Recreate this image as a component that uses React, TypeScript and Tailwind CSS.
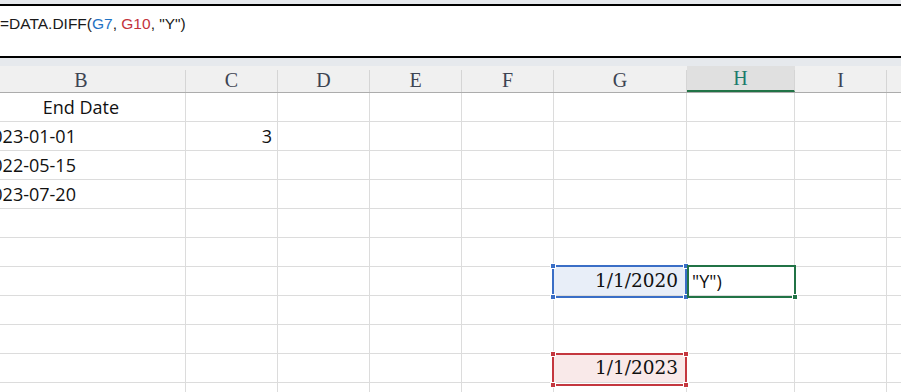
const cols = [
  { key: 'B', w: 'w-[209px] -ml-[23px]' },
  { key: 'C', w: 'w-[92px]' },
  { key: 'D', w: 'w-[92px]' },
  { key: 'E', w: 'w-[92px]' },
  { key: 'F', w: 'w-[92px]' },
  { key: 'G', w: 'w-[133px]' },
  { key: 'H', w: 'w-[108px]' },
  { key: 'I', w: 'w-[92px]' },
  { key: 'J', w: 'w-[92px]' },
];

type Cell = { text?: string; align?: 'left' | 'right' | 'center'; serif?: boolean; bg?: string };
type RowData = Record<string, Cell>;

const rows: RowData[] = [
  { B: { text: 'End Date', align: 'center' } },
  { B: { text: '2023-01-01' }, C: { text: '3', align: 'right' } },
  { B: { text: '2022-05-15' } },
  { B: { text: '2023-07-20' } },
  {},
  {},
  {
    G: { text: '1/1/2020', align: 'right', serif: true, bg: 'bg-[#e8eef8]' },
    H: { text: '"Y")' },
  },
  {},
  {},
  { G: { text: '1/1/2023', align: 'right', serif: true, bg: 'bg-[#f9e9e9]' } },
  {},
];

const sans = "font-['Open_Sans','Noto_Sans',sans-serif]";

const Handle = ({ className }: { className: string }) => (
  <span className={`absolute h-[6px] w-[6px] border border-white ${className}`} />
);

const App = () => (
  <div className="relative h-[392px] w-[901px] overflow-hidden bg-white">
    <div className="h-[4px] bg-[#e6e9ed]" />
    <div className="h-[54px] border-y-2 border-black bg-white pt-[9px] font-['Liberation_Sans',Arial,sans-serif] text-[15.5px] leading-[18px] text-[#1a1a1a]">
      =DATA.DIFF(<span className="text-[#1f73c4]">G7</span>,{' '}
      <span className="text-[#c3323c]">G10</span>, "Y")
    </div>
    <div className="h-[8px] bg-[#e6e9ed]" />

    <div className="flex h-[27px] border-b border-[#acacac] bg-[#f0f0f0] font-['Liberation_Serif',serif] text-[20px] text-[#3d4452]">
      {cols.map((c) => (
        <div
          key={c.key}
          className={`${c.w} shrink-0 pt-[4px] ${c.key === 'H' ? 'bg-[#e0e0e0]' : ''}`}
        >
          <div
            className={`flex h-full items-end justify-center border-r border-[#d5d5d5] pb-[1px] leading-[22px] ${
              c.key === 'H' ? 'border-b-2 border-b-[#217346] text-[#1c7c6c]' : ''
            }`}
          >
            {c.key === 'J' ? '' : c.key}
          </div>
        </div>
      ))}
    </div>

    {rows.map((r, i) => (
      <div key={i} className="flex h-[29px] border-b border-[#dcdcdc]">
        {cols.map((c) => {
          const cell = r[c.key];
          const align =
            cell?.align === 'right'
              ? 'justify-end pr-[5px]'
              : cell?.align === 'center'
              ? 'justify-center'
              : 'justify-start pl-[5px]';
          return (
            <div
              key={c.key}
              className={`${c.w} flex shrink-0 items-end overflow-visible whitespace-nowrap border-r border-[#dcdcdc] pb-[2px] leading-[24px] text-[#111] ${align} ${
                cell?.bg ?? ''
              } ${
                cell?.serif
                  ? "pr-[8px] font-['DejaVu_Serif',serif] text-[18.5px]"
                  : `${sans} text-[18px]`
              }`}
            >
              {cell?.text}
            </div>
          );
        })}
      </div>
    ))}

    {/* G7 reference box */}
    <div className="absolute left-[552px] top-[265px] h-[33px] w-[135px] border-2 border-[#3a6ec6]">
      <Handle className="-left-[4px] -top-[4px] bg-[#3a6ec6]" />
      <Handle className="-right-[4px] -top-[4px] bg-[#3a6ec6]" />
      <Handle className="-bottom-[4px] -left-[4px] bg-[#3a6ec6]" />
      <Handle className="-bottom-[4px] -right-[4px] bg-[#3a6ec6]" />
    </div>

    {/* active cell H7 */}
    <div className="absolute left-[687px] top-[265px] h-[33px] w-[109px] border-2 border-[#217346]">
      <Handle className="-bottom-[4px] -right-[4px] bg-[#217346]" />
    </div>

    {/* G10 reference box */}
    <div className="absolute left-[552px] top-[353px] h-[33px] w-[135px] border-2 border-[#c4373f]">
      <Handle className="-left-[4px] -top-[4px] bg-[#c4373f]" />
      <Handle className="-right-[4px] -top-[4px] bg-[#c4373f]" />
      <Handle className="-bottom-[4px] -left-[4px] bg-[#c4373f]" />
      <Handle className="-bottom-[4px] -right-[4px] bg-[#c4373f]" />
    </div>
  </div>
);

export default App;
